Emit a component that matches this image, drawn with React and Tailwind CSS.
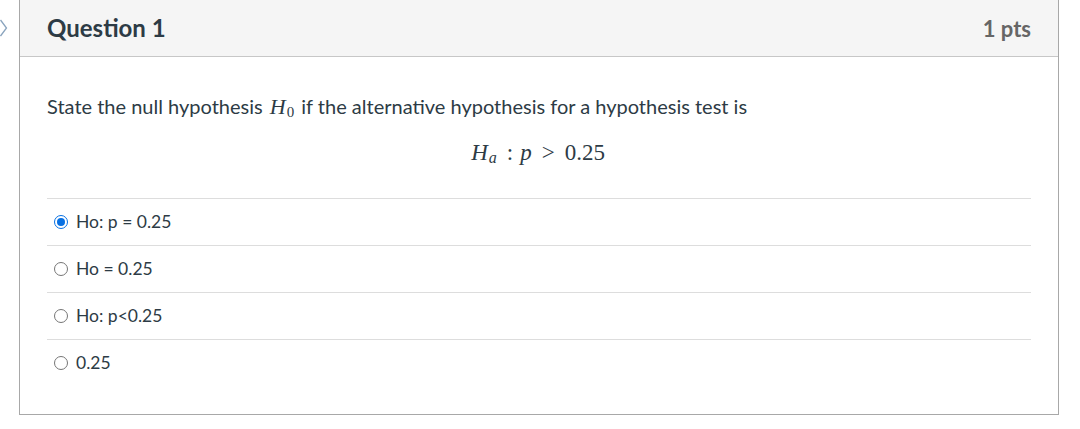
export default function App() {
  const answers = [
    { label: "Ho: p = 0.25", selected: true },
    { label: "Ho = 0.25" },
    { label: "Ho: p<0.25" },
    { label: "0.25" },
  ];
  return (
    <div className="relative w-[1080px] h-[429px] bg-white overflow-hidden" style={{ fontFamily: "Lato, 'Noto Sans', sans-serif" }}>
      <svg className="absolute left-0 top-[19px]" width="8" height="18" viewBox="0 0 8 18">
        <path d="M0.5 1 L6.5 9 L0.5 17" fill="none" stroke="#8aa4be" strokeWidth="1.3" />
      </svg>
      <div className="pl-[19px]">
        <div className="w-[1040px] h-[415px] border-x border-b border-[#a8a8a8] flex flex-col">
          <div className="h-[57px] bg-[#f5f5f5] border-b border-[#c7c7c7] flex items-center justify-between px-[27px]">
            <span className="text-[24px] font-bold text-[#2d3b45]">Question 1</span>
            <span className="text-[22px] font-bold text-[#666666]">1 pts</span>
          </div>
          <div className="px-[27px] pt-[36px] text-[#2d3b45]">
            <p className="text-[20px] leading-[26px] flex items-baseline">
              <span>State the null hypothesis&nbsp;</span>
              <span className="text-[22px] mx-[2px]" style={{ fontFamily: "'Liberation Serif', serif" }}>
                <i>H</i><span className="text-[15px] relative top-[3px] ml-[1px]">0</span>
              </span>
              <span>&nbsp;if the alternative hypothesis for a hypothesis test is</span>
            </p>
            <div className="mt-[17px] flex justify-center">
              <span className="text-[23px] leading-[28px] pr-[2px]" style={{ fontFamily: "'Liberation Serif', serif" }}>
                <i>H</i><i className="text-[16px] relative top-[3px] ml-[1px]">a</i>
                <span className="ml-[10px]">:</span>
                <i className="ml-[7px]">p</i>
                <span className="ml-[10px]">&gt;</span>
                <span className="ml-[10px]">0.25</span>
              </span>
            </div>
            <div className="mt-[29px]">
              {answers.map((a, i) => (
                <div key={i} className="h-[47px] border-t border-[#dddddd] flex items-center pl-[7px]">
                  {a.selected ? (
                    <span className="w-[14px] h-[14px] rounded-full border-[1.5px] border-[#0770e3] flex items-center justify-center">
                      <span className="w-[8px] h-[8px] rounded-full bg-[#0770e3]"></span>
                    </span>
                  ) : (
                    <span className="w-[14px] h-[14px] rounded-full border border-[#767676] bg-white"></span>
                  )}
                  <span className="ml-[8px] text-[17.5px] text-[#2d3b45]">{a.label}</span>
                </div>
              ))}
            </div>
          </div>
        </div>
      </div>
    </div>
  );
}
